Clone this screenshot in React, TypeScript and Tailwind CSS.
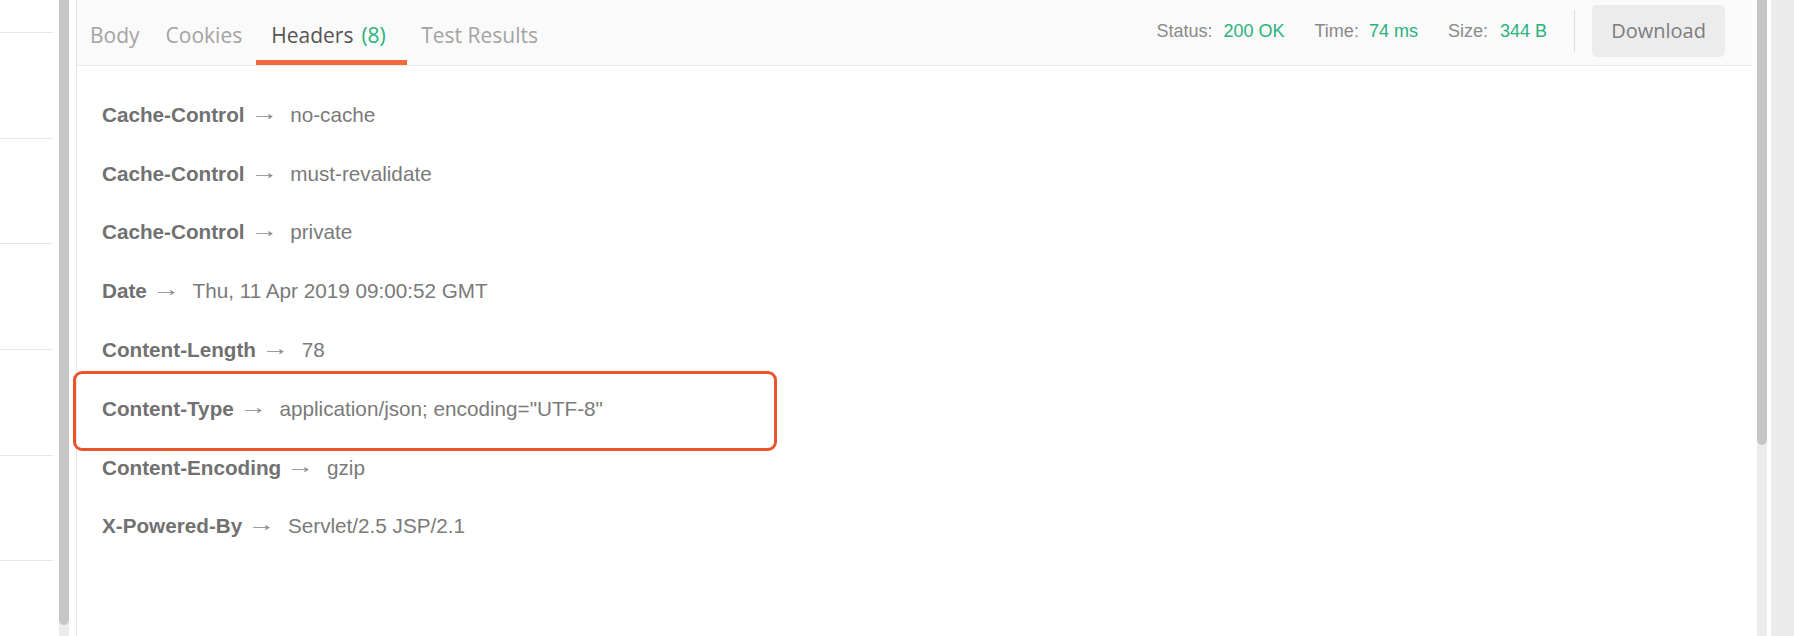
import React from "react"

const headers: [string, string][] = [
  ["Cache-Control", "no-cache"],
  ["Cache-Control", "must-revalidate"],
  ["Cache-Control", "private"],
  ["Date", "Thu, 11 Apr 2019 09:00:52 GMT"],
  ["Content-Length", "78"],
  ["Content-Type", 'application/json; encoding="UTF-8"'],
  ["Content-Encoding", "gzip"],
  ["X-Powered-By", "Servlet/2.5 JSP/2.1"],
]

const sans = { fontFamily: '"Liberation Sans", Arial, sans-serif' }
const open = { fontFamily: '"Open Sans", "Liberation Sans", sans-serif' }

const Sidebar = () => (
  <div className="flex w-[59px] shrink-0 flex-col pt-[32px]">
    {[0, 1, 2, 3, 4, 5].map((i) => (
      <div key={i} className="h-[105.7px] w-[53px] shrink-0 border-t border-[#e6e6e6]" />
    ))}
  </div>
)

const Scrollbar = ({ thumb }: { thumb: string }) => (
  <div className="flex w-[10px] shrink-0 flex-col bg-[#ececec]">
    <div className={`${thumb} w-full rounded-b-[5px] bg-[#c6c6c6]`} />
  </div>
)

const Tabs = () => (
  <div className="flex h-[66px] items-stretch border-b border-[#e8e8e8] bg-[#fafafa]" style={open}>
    <div className="flex pl-[13px] text-[21px]">
      <div className="flex items-center border-b-[5px] border-transparent pt-[11px] text-[#a3a3a3]">Body</div>
      <div className="ml-[26px] flex items-center border-b-[5px] border-transparent pt-[11px] text-[#a3a3a3]">
        Cookies
      </div>
      <div className="ml-[14px] flex w-[151px] items-center border-b-[5px] border-[#ef6b3c] pl-[15px] pt-[11px] text-[#555555]">
        Headers<span className="ml-[8px] text-[#2bb17d]">(8)</span>
      </div>
      <div className="ml-[14px] flex items-center border-b-[5px] border-transparent pt-[11px] text-[#a3a3a3]">
        Test Results
      </div>
    </div>
    <div className="ml-auto flex items-center pr-[27px] pb-[3px]">
      <div className="flex items-center text-[18px]" style={sans}>
        <span className="text-[#8a8a8a]">Status:</span>
        <span className="ml-[11px] text-[#2bb17d]">200 OK</span>
        <span className="ml-[30px] text-[#8a8a8a]">Time:</span>
        <span className="ml-[10px] text-[#2bb17d]">74 ms</span>
        <span className="ml-[30px] text-[#8a8a8a]">Size:</span>
        <span className="ml-[12px] text-[#2bb17d]">344 B</span>
      </div>
      <div className="ml-[27px] h-[42px] w-px bg-[#dcdcdc]" />
      <button className="ml-[17px] flex h-[52px] w-[133px] items-center justify-center rounded-[5px] bg-[#ececec] text-[20px] text-[#7d7d7d]">
        Download
      </button>
    </div>
  </div>
)

const HeaderRows = () => (
  <div className="flex flex-col pl-[25px] pt-[19px]" style={sans}>
    {headers.map(([key, value], i) => (
      <div key={i} className="flex h-[58.8px] items-center text-[20.7px]">
        <span className="font-bold text-[#717171]">{key}</span>
        <span className="ml-[9px] inline-block -translate-y-[2px] scale-x-[1.35] text-[#8a8a8a]">→</span>
        <span className="ml-[16px] text-[#7a7a7a]">{value}</span>
      </div>
    ))}
  </div>
)

export default function App() {
  return (
    <div className="relative flex h-[636px] w-[1794px] overflow-hidden bg-white">
      <Sidebar />
      <Scrollbar thumb="h-[625px]" />
      <div className="w-[7px] shrink-0" />
      <div className="w-px shrink-0 bg-[#e6e6e6]" />
      <div className="flex w-[1675px] shrink-0 flex-col">
        <Tabs />
        <HeaderRows />
      </div>
      <div className="w-[5px] shrink-0" />
      <Scrollbar thumb="h-[445px]" />
      <div className="w-[4px] shrink-0" />
      <div className="w-[23px] shrink-0 bg-[#ebebeb]" />
      <div className="absolute left-[73px] top-[371px] h-[80px] w-[704px] rounded-[9px] border-[3.5px] border-[#e9542e]" />
    </div>
  )
}
